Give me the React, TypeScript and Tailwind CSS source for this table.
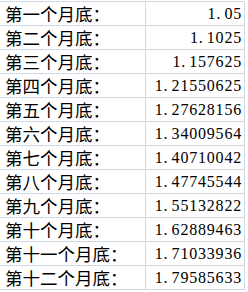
const rows: [string, string][] = [
  ["第一个月底：", "1.05"],
  ["第二个月底：", "1.1025"],
  ["第三个月底：", "1.157625"],
  ["第四个月底：", "1.21550625"],
  ["第五个月底：", "1.27628156"],
  ["第六个月底：", "1.34009564"],
  ["第七个月底：", "1.40710042"],
  ["第八个月底：", "1.47745544"],
  ["第九个月底：", "1.55132822"],
  ["第十个月底：", "1.62889463"],
  ["第十一个月底：", "1.71033936"],
  ["第十二个月底：", "1.79585633"],
];

// spreadsheet number font: half-width digits, period takes a full digit slot
function Num({ value }: { value: string }) {
  const [whole, frac] = value.split(".");
  return (
    <span className="tracking-[0.8px]">
      {whole}
      <span className="inline-block w-[8px]">.</span>
      {frac}
    </span>
  );
}

export default function App() {
  return (
    <div className="h-[292px] w-[248px] overflow-hidden bg-white pt-[1px] text-black">
      <div className="w-[245px] border-t border-[#d0d7e5]">
        {rows.map(([label, value]) => (
          <div key={label} className="flex h-[24px] border-b border-[#d0d7e5]">
            <div className="flex w-[146px] items-center border-r border-[#d0d7e5] pl-[5px] font-['Noto_Sans_CJK_SC',sans-serif] text-[17.5px] leading-none">
              {label}
            </div>
            <div className="flex w-[99px] items-center justify-end border-r border-[#d0d7e5] pr-[2px] font-['Liberation_Serif',serif] text-[16px] leading-none">
              <Num value={value} />
            </div>
          </div>
        ))}
      </div>
    </div>
  );
}
